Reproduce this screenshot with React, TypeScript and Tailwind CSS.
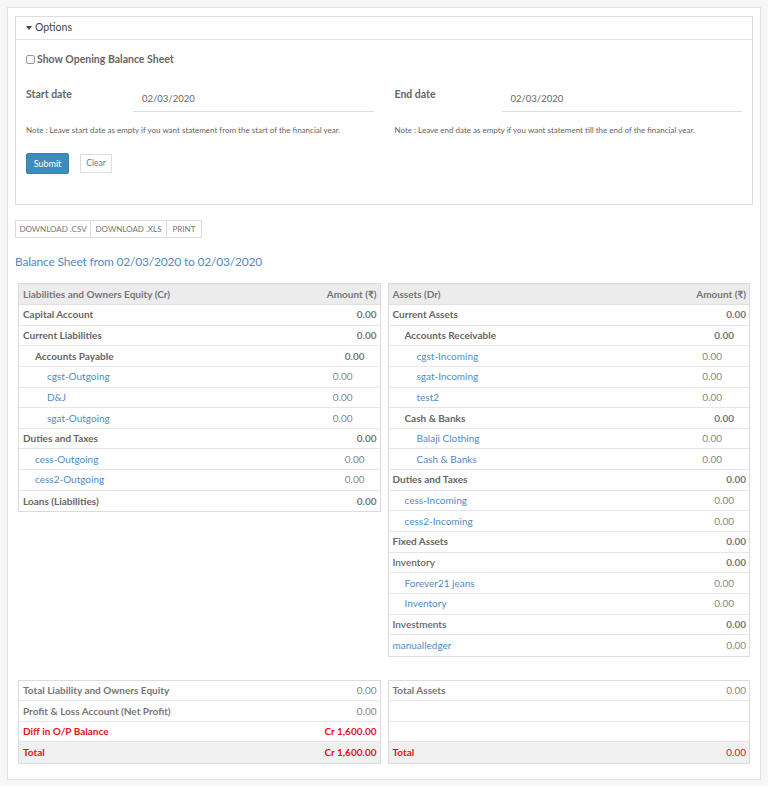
import React from "react";

type RowT = { label: string; amount: string; level: number; kind: "group" | "leaf" | "sub" };

const left: RowT[] = [
  { label: "Capital Account", amount: "0.00", level: 0, kind: "group" },
  { label: "Current Liabilities", amount: "0.00", level: 0, kind: "group" },
  { label: "Accounts Payable", amount: "0.00", level: 1, kind: "group" },
  { label: "cgst-Outgoing", amount: "0.00", level: 2, kind: "leaf" },
  { label: "D&J", amount: "0.00", level: 2, kind: "leaf" },
  { label: "sgat-Outgoing", amount: "0.00", level: 2, kind: "leaf" },
  { label: "Duties and Taxes", amount: "0.00", level: 0, kind: "group" },
  { label: "cess-Outgoing", amount: "0.00", level: 1, kind: "leaf" },
  { label: "cess2-Outgoing", amount: "0.00", level: 1, kind: "leaf" },
  { label: "Loans (Liabilities)", amount: "0.00", level: 0, kind: "group" },
];

const right: RowT[] = [
  { label: "Current Assets", amount: "0.00", level: 0, kind: "group" },
  { label: "Accounts Receivable", amount: "0.00", level: 1, kind: "group" },
  { label: "cgst-Incoming", amount: "0.00", level: 2, kind: "leaf" },
  { label: "sgat-Incoming", amount: "0.00", level: 2, kind: "leaf" },
  { label: "test2", amount: "0.00", level: 2, kind: "leaf" },
  { label: "Cash & Banks", amount: "0.00", level: 1, kind: "group" },
  { label: "Balaji Clothing", amount: "0.00", level: 2, kind: "leaf" },
  { label: "Cash & Banks", amount: "0.00", level: 2, kind: "leaf" },
  { label: "Duties and Taxes", amount: "0.00", level: 0, kind: "group" },
  { label: "cess-Incoming", amount: "0.00", level: 1, kind: "leaf" },
  { label: "cess2-Incoming", amount: "0.00", level: 1, kind: "leaf" },
  { label: "Fixed Assets", amount: "0.00", level: 0, kind: "group" },
  { label: "Inventory", amount: "0.00", level: 0, kind: "sub" },
  { label: "Forever21 jeans", amount: "0.00", level: 1, kind: "leaf" },
  { label: "Inventory", amount: "0.00", level: 1, kind: "leaf" },
  { label: "Investments", amount: "0.00", level: 0, kind: "sub" },
  { label: "manualledger", amount: "0.00", level: 0, kind: "leaf" },
];

const padL = ["pl-[4px]", "pl-[16px]", "pl-[28px]"];
const padR = ["pr-[3px]", "pr-[15px]", "pr-[27px]"];

function Row({ r }: { r: RowT }) {
  const isLeaf = r.kind === "leaf";
  return (
    <div
      className={`flex h-[20.65px] items-center justify-between border-b border-[#e6e6e6] last:border-b-0 ${padL[r.level]} ${padR[r.level]}`}
    >
      <span
        className={
          isLeaf
            ? "text-[#4f8cc4]"
            : r.kind === "sub"
            ? "font-semibold text-[#666]"
            : "font-bold text-[#666]"
        }
      >
        {r.label}
      </span>
      <span className={isLeaf ? "text-[#888]" : "font-bold text-[#777]"}>{r.amount}</span>
    </div>
  );
}

function Table({ title, rows }: { title: string; rows: RowT[] }) {
  return (
    <div className="border border-[#dcdcdc] bg-white text-[10px]">
      <div className="flex h-[21px] items-center justify-between border-b border-[#e0e0e0] bg-[#ececec] pl-[4px] pr-[3px] font-bold text-[#777]">
        <span>{title}</span>
        <span>Amount (₹)</span>
      </div>
      {rows.map((r, i) => (
        <Row key={i} r={r} />
      ))}
    </div>
  );
}

function TotalRow({
  label,
  amount,
  red,
  bg,
  amountBold,
}: {
  label: string;
  amount: string;
  red?: boolean;
  bg?: boolean;
  amountBold?: boolean;
}) {
  return (
    <div
      className={`flex h-[20.5px] items-center justify-between border-b border-[#e6e6e6] pl-[4px] pr-[3px] last:border-b-0 ${
        bg ? "bg-[#f0f0f0]" : "bg-white"
      }`}
    >
      <span className={`font-bold ${red ? "text-[#e8101a]" : "text-[#777]"}`}>{label}</span>
      <span className={`${amountBold ? "font-bold" : ""} ${red ? "text-[#e8101a]" : "text-[#888]"}`}>
        {amount}
      </span>
    </div>
  );
}

function DateField({ label, note }: { label: string; note: string }) {
  return (
    <div className="flex flex-col">
      <div className="flex items-start">
        <div className="w-[107px] pt-[1px] text-[10.5px] font-bold leading-[14px] text-[#666]">{label}</div>
        <div className="mt-[2px] flex h-[24px] flex-1 items-end border-b border-[#dcdcdc] pb-[5px] pl-[9px] text-[9.5px] text-[#666]">
          02/03/2020
        </div>
      </div>
      <div className="mt-[13px] text-[8px] leading-[10px] text-[#666]">{note}</div>
    </div>
  );
}

export default function App() {
  return (
    <div
      className="min-h-[786px] w-[768px] bg-[#f6f6f6] pt-[7px]"
      style={{ fontFamily: "Lato, 'Open Sans', sans-serif" }}
    >
      <div className="mx-[7px] h-[773px] w-[754px] border border-[#e2e2e2] bg-white px-[7px] pt-[8px]">
        {/* Options */}
        <div className="h-[189px] border border-[#dcdcdc] bg-white">
          <div className="flex h-[23px] items-center gap-[3px] border-b border-[#e2e2e2] pl-[10px] text-[10.5px] text-[#444]">
            <svg width="6" height="5" viewBox="0 0 6 5" className="mt-[1px]">
              <path d="M0 0 L6 0 L3 4 Z" fill="#444" />
            </svg>
            <span>Options</span>
          </div>
          <div className="px-[10px]">
            <div className="mt-[12px] flex items-center gap-[2px]">
              <span className="inline-block h-[9px] w-[9px] rounded-[2px] border border-[#999] bg-[#f8f8f8]" />
              <span className="text-[10.5px] font-bold text-[#666]">Show Opening Balance Sheet</span>
            </div>
            <div className="mt-[18px] grid grid-cols-2 gap-[21px]">
              <DateField
                label="Start date"
                note="Note : Leave start date as empty if you want statement from the start of the financial year."
              />
              <DateField
                label="End date"
                note="Note : Leave end date as empty if you want statement till the end of the financial year."
              />
            </div>
            <div className="mt-[18px] flex items-center gap-[11px]">
              <button className="h-[21px] w-[43px] rounded-[2px] border border-[#367fa9] bg-[#3c8dbc] text-[9px] text-white">
                Submit
              </button>
              <button className="h-[19px] w-[32px] border border-[#dedede] bg-white text-[8.5px] text-[#777]">
                Clear
              </button>
            </div>
          </div>
        </div>

        {/* Download buttons */}
        <div className="mt-[15px] flex h-[18px] w-fit border border-[#dcdcdc] bg-white text-[8px] uppercase text-[#777]">
          <div className="flex w-[75px] items-center justify-center border-r border-[#dcdcdc]">Download .csv</div>
          <div className="flex w-[76px] items-center justify-center border-r border-[#dcdcdc]">Download .xls</div>
          <div className="flex w-[34px] items-center justify-center">Print</div>
        </div>

        <div className="mt-[15px] text-[12px] leading-[18px] tracking-[-0.2px] text-[#4f8cc4]">
          Balance Sheet from 02/03/2020 to 02/03/2020
        </div>

        <div className="mt-[12px] grid grid-cols-2 items-start gap-[7px] px-[3px]">
          <Table title="Liabilities and Owners Equity (Cr)" rows={left} />
          <Table title="Assets (Dr)" rows={right} />
        </div>

        <div className="mt-[23px] grid grid-cols-2 items-start gap-[7px] px-[3px] text-[10px]">
          <div className="border border-[#dcdcdc]">
            <TotalRow label="Total Liability and Owners Equity" amount="0.00" />
            <TotalRow label="Profit & Loss Account (Net Profit)" amount="0.00" />
            <TotalRow label="Diff in O/P Balance" amount="Cr 1,600.00" red amountBold />
            <TotalRow label="Total" amount="Cr 1,600.00" red bg amountBold />
          </div>
          <div className="border border-[#dcdcdc]">
            <TotalRow label="Total Assets" amount="0.00" />
            <TotalRow label="" amount="" />
            <TotalRow label="" amount="" />
            <TotalRow label="Total" amount="0.00" red bg />
          </div>
        </div>
      </div>
    </div>
  );
}
